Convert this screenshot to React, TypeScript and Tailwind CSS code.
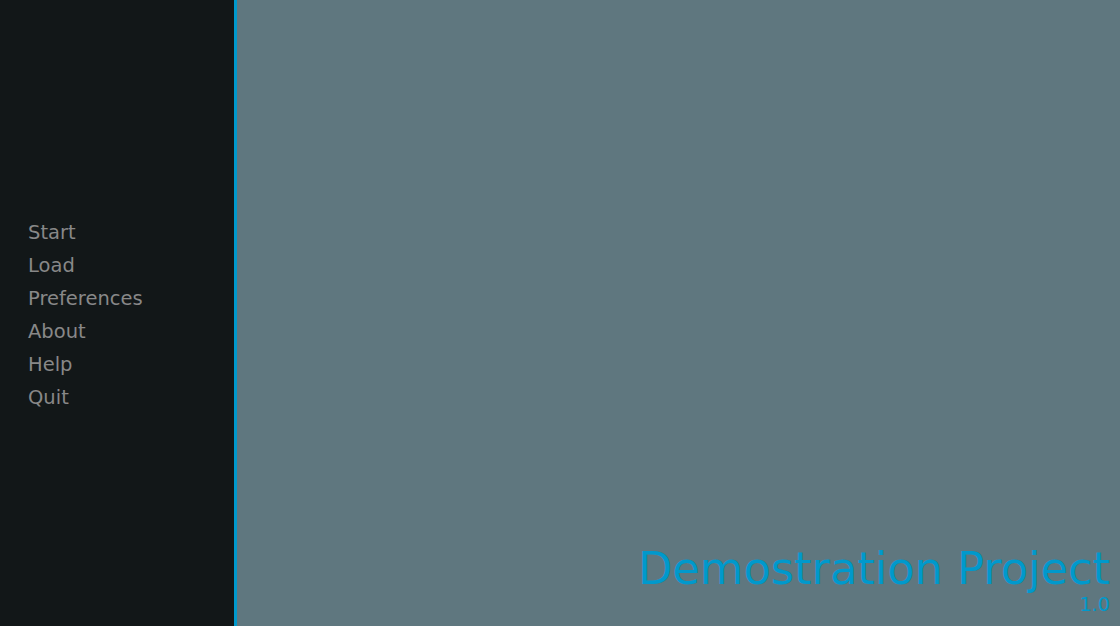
const menuItems = ["Start", "Load", "Preferences", "About", "Help", "Quit"];

export default function App() {
  return (
    <div
      className="flex h-[626px] w-[1120px] overflow-hidden"
      style={{ fontFamily: '"DejaVu Sans", sans-serif' }}
    >
      {/* navigation sidebar */}
      <nav className="flex w-[234px] shrink-0 flex-col justify-center bg-[#121718] pl-[28px] pt-[4px]">
        {menuItems.map((item) => (
          <button
            key={item}
            className="text-left text-[19.5px] leading-[33px] text-[#888888] hover:text-[#0099cc]"
          >
            {item}
          </button>
        ))}
      </nav>
      <div className="w-[3px] shrink-0 bg-[#0099cc]" />

      {/* main area with title */}
      <main className="flex flex-1 flex-col items-end justify-end bg-[#5f777f] pb-[11px] pr-[10px]">
        <h1 className="text-[44.7px] leading-[44px] text-[#0099cc]">Demostration Project</h1>
        <p className="mt-[4px] text-[19.25px] leading-[20px] text-[#0099cc]">1.0</p>
      </main>
    </div>
  );
}
